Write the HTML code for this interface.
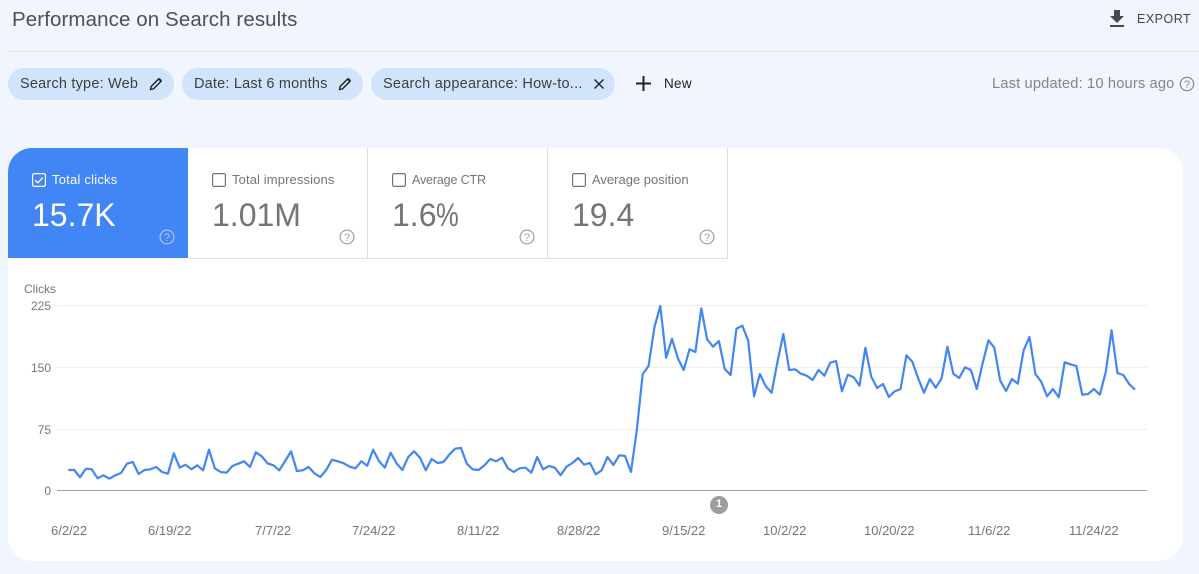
<!DOCTYPE html>
<html><head><meta charset="utf-8">
<style>
html,body{margin:0;padding:0;width:1199px;height:574px;overflow:hidden;background:#f1f5fd;font-family:"Liberation Sans",sans-serif}
.t{position:absolute;white-space:nowrap;line-height:1}
.b{position:absolute}
svg{position:absolute;overflow:visible}
.ax{font-size:12px;color:#757575}
.dt{font-size:13px;color:#757575;top:524px}
.yl{font-size:12px;color:#757575;text-align:right;width:30px;left:21px}
.chip{position:absolute;top:68px;height:32px;border-radius:16px;background:#d2e3fc}
.cl{font-size:14.5px;color:#3c4043;top:77px;letter-spacing:.2px}
.lbl{font-size:13px;color:#757575;top:173px;letter-spacing:.12px}
.val{font-size:32px;color:#747474;top:199px}
</style></head><body>
<div class="t" style="left:12px;top:10px;font-size:20.5px;color:#4d5156;letter-spacing:.1px">Performance on Search results</div>
<svg style="left:1105px;top:7px" width="24" height="24" viewBox="0 0 24 24"><path d="M19 9h-4V3H9v6H5l7 7 7-7zM5 18v2h14v-2H5z" fill="#4a4a4a"/></svg>
<div class="t" style="left:1137px;top:13px;font-size:12.5px;color:#444;letter-spacing:.5px">EXPORT</div>
<div class="b" style="left:8px;top:51px;width:1191px;height:1px;background:#e0e3e8"></div>

<div class="chip" style="left:8px;width:166px"></div>
<div class="t cl" style="left:20px">Search type: Web</div>
<svg style="left:148px;top:76px" width="16" height="16" viewBox="0 0 16 16"><path d="M2.5 13.5l.6-3L10.6 3l2.4 2.4-7.5 7.5z" fill="none" stroke="#202124" stroke-width="1.4"/><path d="M10.6 3l1-1 2.4 2.4-1 1z" fill="#202124"/></svg>
<div class="chip" style="left:182px;width:181px"></div>
<div class="t cl" style="left:194px">Date: Last 6 months</div>
<svg style="left:337px;top:76px" width="16" height="16" viewBox="0 0 16 16"><path d="M2.5 13.5l.6-3L10.6 3l2.4 2.4-7.5 7.5z" fill="none" stroke="#202124" stroke-width="1.4"/><path d="M10.6 3l1-1 2.4 2.4-1 1z" fill="#202124"/></svg>
<div class="chip" style="left:371px;width:244px"></div>
<div class="t cl" style="left:383px;letter-spacing:.25px">Search appearance: How-to...</div>
<svg style="left:593px;top:78px" width="12" height="12" viewBox="0 0 12 12"><path d="M1.5 1.5l9 9M10.5 1.5l-9 9" stroke="#202124" stroke-width="1.4" fill="none"/></svg>
<svg style="left:636px;top:76px" width="15" height="15" viewBox="0 0 15 15"><path d="M0 7.5h15M7.5 0v15" stroke="#202124" stroke-width="2" fill="none"/></svg>
<div class="t" style="left:664px;top:77px;font-size:13.5px;color:#202124;letter-spacing:.3px">New</div>
<div class="t" style="left:992px;top:77px;font-size:14.7px;color:#80868b;letter-spacing:.14px">Last updated: 10 hours ago</div>
<svg style="left:1179px;top:76px" width="16" height="16" viewBox="0 0 16 16"><circle cx="8" cy="8" r="6.7" fill="none" stroke="#80868b" stroke-width="1.2"/><text x="8" y="12" font-size="11" text-anchor="middle" fill="#80868b" font-family="Liberation Sans">?</text></svg>

<div class="b" style="left:8px;top:148px;width:1175px;height:413px;background:#fff;border-radius:24px"></div>
<div class="b" style="left:8px;top:148px;width:180px;height:110px;background:#4285f4;border-radius:24px 0 0 0"></div>
<div class="b" style="left:188px;top:258px;width:540px;height:1px;background:#e0e0e0"></div>
<div class="b" style="left:367px;top:148px;width:1px;height:110px;background:#e0e0e0"></div>
<div class="b" style="left:547px;top:148px;width:1px;height:110px;background:#e0e0e0"></div>
<div class="b" style="left:727px;top:148px;width:1px;height:111px;background:#e0e0e0"></div>

<svg style="left:32px;top:173px" width="14" height="14" viewBox="0 0 14 14"><rect x=".6" y=".6" width="12.8" height="12.8" rx="1.5" fill="none" stroke="#fff" stroke-width="1.2"/><path d="M3.2 7.2l2.6 2.6 5-5.2" fill="none" stroke="#fff" stroke-width="1.4"/></svg>
<div class="t lbl" style="left:52px;color:#fff;letter-spacing:.22px">Total clicks</div>
<div class="t val" style="left:32px;color:#fff">15.7K</div>
<svg style="left:159px;top:229px" width="16" height="16" viewBox="0 0 16 16"><circle cx="8" cy="8" r="6.9" fill="none" stroke="#a9c7f9" stroke-width="1.2"/><text x="8" y="12" font-size="11" text-anchor="middle" fill="#a9c7f9" font-family="Liberation Sans">?</text></svg>

<svg style="left:212px;top:173px" width="14" height="14" viewBox="0 0 14 14"><rect x=".6" y=".6" width="12.8" height="12.8" rx="1.5" fill="none" stroke="#757575" stroke-width="1.2"/></svg>
<div class="t lbl" style="left:232px">Total impressions</div>
<div class="t val" style="left:212px">1.01M</div>
<svg style="left:339px;top:229px" width="16" height="16" viewBox="0 0 16 16"><circle cx="8" cy="8" r="6.9" fill="none" stroke="#9e9e9e" stroke-width="1.2"/><text x="8" y="12" font-size="11" text-anchor="middle" fill="#9e9e9e" font-family="Liberation Sans">?</text></svg>

<svg style="left:392px;top:173px" width="14" height="14" viewBox="0 0 14 14"><rect x=".6" y=".6" width="12.8" height="12.8" rx="1.5" fill="none" stroke="#757575" stroke-width="1.2"/></svg>
<div class="t lbl" style="left:412px;top:174px;font-size:12.5px;letter-spacing:-.15px">Average CTR</div>
<div class="t val" style="left:392px">1.6<span style="display:inline-block;transform:scaleX(.8);transform-origin:0 50%">%</span></div>
<svg style="left:519px;top:229px" width="16" height="16" viewBox="0 0 16 16"><circle cx="8" cy="8" r="6.9" fill="none" stroke="#9e9e9e" stroke-width="1.2"/><text x="8" y="12" font-size="11" text-anchor="middle" fill="#9e9e9e" font-family="Liberation Sans">?</text></svg>

<svg style="left:572px;top:173px" width="14" height="14" viewBox="0 0 14 14"><rect x=".6" y=".6" width="12.8" height="12.8" rx="1.5" fill="none" stroke="#757575" stroke-width="1.2"/></svg>
<div class="t lbl" style="left:592px;letter-spacing:0">Average position</div>
<div class="t val" style="left:572px">19.4</div>
<svg style="left:699px;top:229px" width="16" height="16" viewBox="0 0 16 16"><circle cx="8" cy="8" r="6.9" fill="none" stroke="#9e9e9e" stroke-width="1.2"/><text x="8" y="12" font-size="11" text-anchor="middle" fill="#9e9e9e" font-family="Liberation Sans">?</text></svg>

<div class="t ax" style="left:24px;top:283px">Clicks</div>
<div class="t yl" style="top:300px">225</div>
<div class="t yl" style="top:362px">150</div>
<div class="t yl" style="top:424px">75</div>
<div class="t yl" style="top:485px">0</div>
<div class="b" style="left:57px;top:305px;width:1090px;height:1px;background:#eeeeee"></div>
<div class="b" style="left:57px;top:367px;width:1090px;height:1px;background:#eeeeee"></div>
<div class="b" style="left:57px;top:429px;width:1090px;height:1px;background:#eeeeee"></div>
<div class="b" style="left:57px;top:490px;width:1090px;height:1px;background:#9e9e9e"></div>

<svg style="left:0;top:0" width="1199" height="574" viewBox="0 0 1199 574">
<polyline transform="translate(68.3 0) scale(5.861 1)" vector-effect="non-scaling-stroke" fill="none" stroke="#4285f4" stroke-width="2.2" stroke-linejoin="round" points="0,470 1,470 2,477.3 3,468.7 4,469.3 5,478.3 6,475.3 7,478.7 8,475.3 9,473 10,463.7 11,462 12,474 13,470 14,469.3 15,467 16,472 17,473.7 18,453.3 19,467.7 20,464.7 21,469.3 22,465.3 23,470.3 24,449.7 25,468.3 26,472 27,472.7 28,466 29,463.7 30,461.3 31,467 32,452.3 33,456.3 34,463.3 35,465.3 36,470.3 37,461 38,451.3 39,471 40,470.3 41,467 42,473.3 43,477 44,470 45,459.7 46,461.3 47,463.3 48,466.7 49,468.3 50,461.3 51,465.7 52,449.7 53,461 54,467.7 55,452.7 56,463.3 57,470 58,457 59,451.3 60,457.7 61,470.3 62,459 63,463 64,462 65,454.7 66,448.7 67,448 68,463.7 69,469.3 70,470 71,465.3 72,459 73,461.3 74,457.7 75,468.3 76,472 77,468.3 78,467.7 79,472.7 80,457 81,469.3 82,466 83,467.7 84,475.3 85,466.7 86,463 87,458 88,464.7 89,463 90,474.3 91,470.3 92,457 93,465 94,455.3 95,456 96,472 97,430 98,374.3 99,366 100,327.3 101,306 102,357.7 103,338.7 104,358.3 105,370 106,349.3 107,352 108,308.3 109,339.3 110,346.7 111,341 112,369 113,375 114,328.7 115,325.7 116,340.7 117,396.3 118,374 119,386.3 120,392.7 121,361.7 122,334 123,370 124,369.3 125,373.7 126,375.7 127,380 128,370 129,375.7 130,362.7 131,361 132,391.3 133,374.7 134,377.3 135,385.7 136,347.7 137,376.7 138,388 139,384 140,397 141,391.3 142,389 143,355.3 144,361.7 145,378.3 146,392.7 147,379 148,387.7 149,378.3 150,346.7 151,373.7 152,378 153,367.3 154,370 155,389 156,363.3 157,340.3 158,347.7 159,380.7 160,391 161,379 162,383.7 163,350.3 164,337 165,374 166,381.7 167,396.3 168,389 169,397.3 170,362.3 171,364.3 172,366 173,394.7 174,394 175,389 176,394.7 177,372.3 178,330.3 179,373 180,375 181,384 182,389.7"/>
</svg>

<div class="b" style="left:710px;top:496px;width:18px;height:18px;border-radius:50%;background:#9e9e9e"></div>
<div class="t" style="left:716px;top:499px;font-size:11px;font-weight:bold;color:#fff">1</div>

<div class="t dt" style="left:51px">6/2/22</div>
<div class="t dt" style="left:148px">6/19/22</div>
<div class="t dt" style="left:255px">7/7/22</div>
<div class="t dt" style="left:352px">7/24/22</div>
<div class="t dt" style="left:457px">8/11/22</div>
<div class="t dt" style="left:557px">8/28/22</div>
<div class="t dt" style="left:662px">9/15/22</div>
<div class="t dt" style="left:763px">10/2/22</div>
<div class="t dt" style="left:864px">10/20/22</div>
<div class="t dt" style="left:968px">11/6/22</div>
<div class="t dt" style="left:1069px">11/24/22</div>
</body></html>
